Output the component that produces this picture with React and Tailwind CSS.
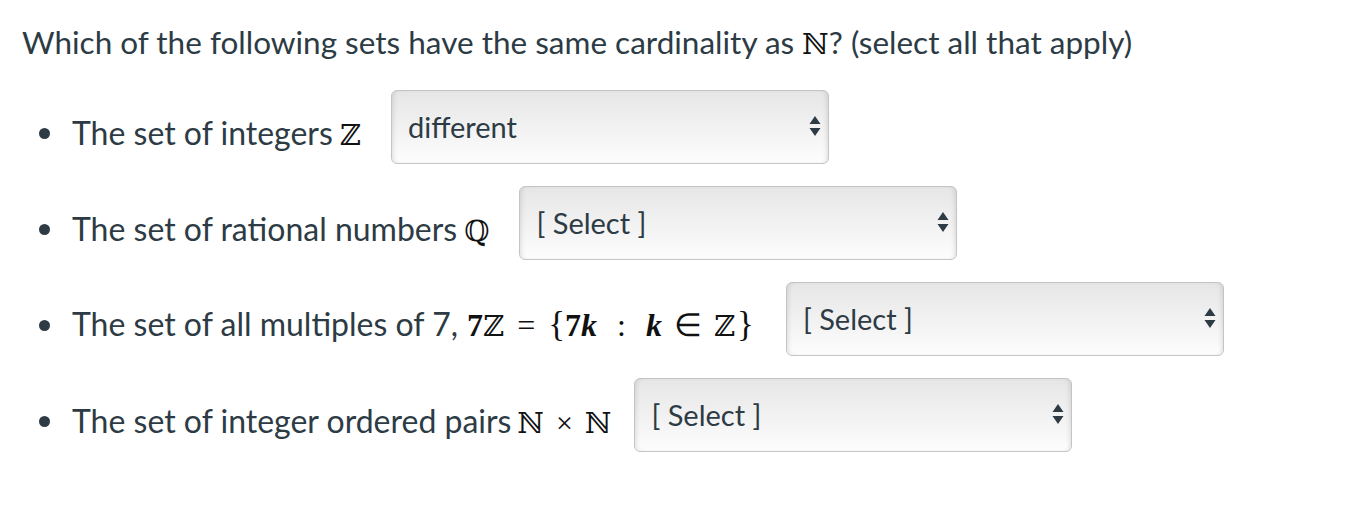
import React from "react";

const Arrows = () => (
  <svg width="12" height="22" viewBox="0 0 12 22" className="shrink-0">
    <path d="M6 1 L11.5 9 L0.5 9 Z" fill="#2d3b45" />
    <path d="M0.5 13 L11.5 13 L6 21 Z" fill="#2d3b45" />
  </svg>
);

const Select = ({ value }) => (
  <div className="w-[438px] h-[74px] shrink-0 rounded-[6px] border border-[#c4c4c4] bg-gradient-to-b from-[#e6e6e6] to-[#fdfdfd] shadow-[inset_4px_0_5px_-3px_rgba(0,0,0,0.12),inset_-4px_0_5px_-3px_rgba(0,0,0,0.12)] flex items-center justify-between pl-[16px] pr-[7px] pb-[2px]">
    <span className="text-[29px] text-[#2d3b45] font-['Lato'] leading-none">{value}</span>
    <Arrows />
  </div>
);

const M = ({ children, className = "" }) => (
  <span className={"font-['DejaVu_Serif','Liberation_Serif',serif] text-[#111] " + className}>{children}</span>
);

const Row = ({ label, math, value, gap }) => (
  <li className="flex items-center h-[74px] mb-[22px]">
    <span className="w-[11px] h-[11px] rounded-full bg-[#2d3b45] ml-[17px] mr-[22px] mt-[12px] shrink-0" />
    <span className="mt-[12px] whitespace-nowrap flex items-baseline">
      <span>{label}</span>
      {math}
    </span>
    <span style={{ width: gap }} className="shrink-0" />
    <Select value={value} />
  </li>
);

export default function App() {
  return (
    <div className="w-[1368px] h-[518px] bg-white font-['Lato'] text-[#2d3b45] text-[32px] pl-[22px] pt-[22px] overflow-hidden">
      <p className="leading-[40px] whitespace-nowrap text-[31.5px]">
        Which of the following sets have the same cardinality as <M className="text-[29px]">ℕ</M>? (select all that apply)
      </p>
      <ul className="mt-[26px]">
        <Row
          label="The set of integers"
          math={<M className="ml-[7px] text-[29px]">ℤ</M>}
          value="different"
          gap={30}
        />
        <Row
          label="The set of rational numbers"
          math={<M className="ml-[7px] text-[29px]">ℚ</M>}
          value="[ Select ]"
          gap={30}
        />
        <Row
          label="The set of all multiples of 7,"
          math={
            <span className="ml-[9px] font-['Liberation_Serif',serif] text-[#111] text-[32px] flex items-baseline">
              <span className="font-bold">7</span>
              <M className="text-[29px]">ℤ</M>
              <span className="mx-[13px]">=</span>
              <span className="text-[35px]">{"{"}</span>
              <span className="font-bold">7</span>
              <span className="italic font-bold">k</span>
              <span className="ml-[20px] mr-[20px]">:</span>
              <span className="italic font-bold">k</span>
              <span className="mx-[12px]">∈</span>
              <M className="text-[29px]">ℤ</M>
              <span className="text-[35px] ml-[2px]">{"}"}</span>
            </span>
          }
          value="[ Select ]"
          gap={32}
        />
        <Row
          label="The set of integer ordered pairs"
          math={
            <span className="ml-[6px] flex items-baseline">
              <M className="text-[29px]">ℕ</M>
              <span className="mx-[12px] font-['Liberation_Serif',serif] text-[#111] text-[30px]">×</span>
              <M className="text-[29px]">ℕ</M>
            </span>
          }
          value="[ Select ]"
          gap={23}
        />
      </ul>
    </div>
  );
}
